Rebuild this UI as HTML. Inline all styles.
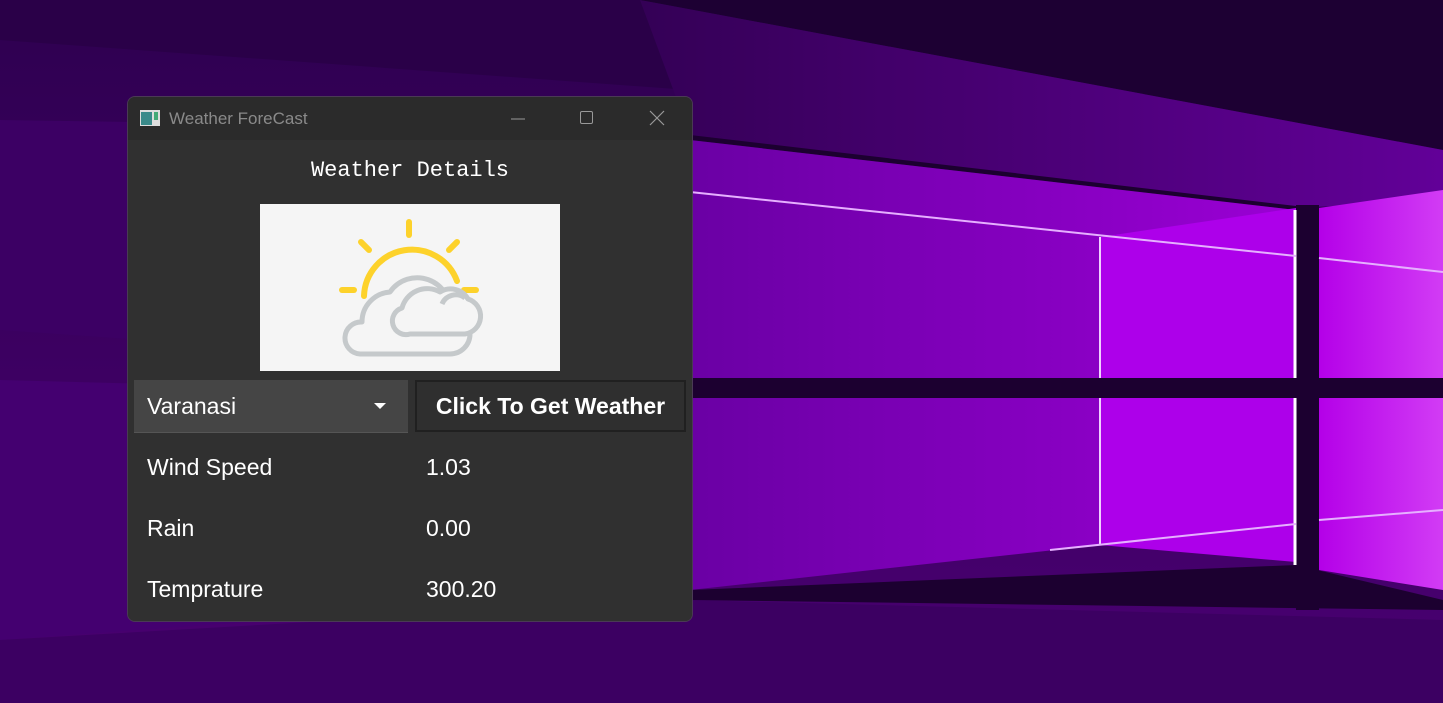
<!DOCTYPE html>
<html><head><style>
body{margin:0;width:1443px;height:703px;overflow:hidden;position:relative;font-family:"Liberation Sans",sans-serif;background:#2a0048}
svg.bg{position:absolute;left:0;top:0}
.win{position:absolute;left:127px;top:96px;width:566px;height:526px;background:#2f2f2f;border:1px solid #4a3a55;border-radius:8px;box-sizing:border-box;overflow:hidden}
.tb{height:43px;background:#2b2b2b;position:relative;color:#8a8a8a;font-size:17px}
.tb .t{position:absolute;left:41px;top:12px}
.body{position:absolute;left:0;top:43px;right:0;bottom:0;background:#303030}
.lbl{position:absolute;color:#fff;font-family:"Liberation Sans",sans-serif;font-size:23px}
</style></head><body>
<svg class="bg" width="1443" height="703" viewBox="0 0 1443 703">
<defs>
<linearGradient id="g1" x1="0" y1="0" x2="1" y2="0"><stop offset="0" stop-color="#6a00a4"/><stop offset="1" stop-color="#9a00d4"/></linearGradient>
<linearGradient id="g2" x1="0" y1="0" x2="1" y2="0"><stop offset="0" stop-color="#b400e8"/><stop offset="1" stop-color="#d23cf5"/></linearGradient>
<linearGradient id="g3" x1="0" y1="0" x2="1" y2="0"><stop offset="0" stop-color="#340056"/><stop offset="1" stop-color="#620098"/></linearGradient>
<linearGradient id="g4" x1="0" y1="0" x2="0" y2="1"><stop offset="0" stop-color="#2e0050"/><stop offset="1" stop-color="#4a0072"/></linearGradient>
</defs>
<rect width="1443" height="703" fill="url(#g4)"/>
<polygon points="0,0 650,0 690,90 0,40" fill="#2a0048"/>
<polygon points="0,120 690,130 690,378 0,330" fill="#3c0064"/>
<polygon points="0,380 690,398 690,590 0,640" fill="#440070"/>
<polygon points="0,640 690,600 1443,620 1443,703 0,703" fill="#3c0062"/>
<polygon points="640,0 1443,0 1443,150" fill="#1d0033"/>
<polygon points="640,0 1443,150 1443,200 1296,208 690,135" fill="url(#g3)"/>
<polygon points="690,135 1296,206 1296,210 690,140" fill="#1c0030"/>
<polygon points="690,140 1296,210 1100,237 1100,545 690,590" fill="url(#g1)"/>
<polygon points="1100,237 1296,208 1296,378 1100,378" fill="#ad00ea"/>
<polygon points="1100,398 1296,398 1296,562 1100,545" fill="#ad00ea"/>
<polygon points="1319,208 1443,190 1443,378 1319,378" fill="url(#g2)"/>
<polygon points="1319,398 1443,398 1443,590 1319,570" fill="url(#g2)"/>
<rect x="1296" y="205" width="23" height="405" fill="#1c0030"/>
<rect x="690" y="378" width="753" height="20" fill="#1c0030"/>
<line x1="1100" y1="237" x2="1100" y2="378" stroke="#f0d0ff" stroke-width="2"/>
<line x1="1100" y1="398" x2="1100" y2="545" stroke="#f0d0ff" stroke-width="2"/>
<line x1="1295" y1="210" x2="1295" y2="378" stroke="#fff" stroke-width="3"/>
<line x1="1295" y1="398" x2="1295" y2="565" stroke="#fff" stroke-width="3"/>
<line x1="690" y1="192" x2="1296" y2="256" stroke="#e6b0ff" stroke-width="2"/>
<line x1="1319" y1="258" x2="1443" y2="272" stroke="#e6b0ff" stroke-width="2"/>
<line x1="1050" y1="550" x2="1296" y2="524" stroke="#e6b0ff" stroke-width="2"/>
<line x1="1319" y1="520" x2="1443" y2="510" stroke="#e6b0ff" stroke-width="2"/>
<polygon points="690,590 1296,565 1443,600 1443,610 690,600" fill="#1c0030"/>
</svg>
<div class="win">
<div class="tb">
<svg style="position:absolute;left:12px;top:13px" width="20" height="16"><rect x="0" y="0" width="20" height="16" fill="#ddd"/><rect x="1" y="2" width="11" height="13" fill="#3a8a8a"/><rect x="14" y="2" width="4" height="8" fill="#4a7"/></svg>
<span class="t">Weather ForeCast</span>
<svg style="position:absolute;left:382px;top:14px" width="16" height="16"><line x1="1" y1="8" x2="15" y2="8" stroke="#999" stroke-width="1"/></svg>
<svg style="position:absolute;left:451px;top:13px" width="16" height="16"><rect x="1.5" y="1.5" width="12" height="12" rx="1.5" fill="none" stroke="#999"/></svg>
<svg style="position:absolute;left:521px;top:13px" width="16" height="16"><path d="M1 1L15 15M15 1L1 15" stroke="#999" stroke-width="1.2"/></svg>
</div>
<div class="body">
<div style="position:absolute;left:0;right:0;top:18px;text-align:center;color:#fff;font-family:'Liberation Mono',monospace;font-size:22px">Weather Details</div>
<div style="position:absolute;left:132px;top:64px;width:300px;height:167px;background:#f5f5f5">
<svg width="300" height="167" viewBox="0 0 300 167">
<g stroke="#fdd22b" stroke-width="6" stroke-linecap="round" fill="none">
<path d="M104 92 A48 48 0 0 1 197 77"/>
<line x1="149" y1="18" x2="149" y2="31"/>
<line x1="101" y1="38" x2="109" y2="46"/>
<line x1="197" y1="38" x2="189" y2="46"/>
<line x1="82" y1="86" x2="94" y2="86"/>
<line x1="204" y1="86" x2="216" y2="86"/>
</g>
<g stroke="#c5c9cb" stroke-width="5" fill="#f5f5f5" stroke-linejoin="round">
<path d="M100 150 H190 A20 20 0 0 0 190 110 A33 33 0 0 0 130 88 A30 30 0 0 0 102 118 A16 16 0 0 0 100 150 Z"/>
<path d="M150 130 H205 A18 18 0 0 0 208 95 A20 20 0 0 0 180 88 A26 26 0 0 0 142 104 A13 13 0 0 0 150 130 Z"/>
<path d="M182 100 A15 15 0 0 1 205 94"/>
</g>
</svg></div>
<div style="position:absolute;left:6px;top:240px;width:274px;height:52px;background:#454545;border-bottom:1px solid #555"></div>
<div class="lbl" style="left:19px;top:253px">Varanasi</div>
<svg style="position:absolute;left:246px;top:262px" width="12" height="8"><path d="M0 1H12L6 7Z" fill="#fff"/></svg>
<div style="position:absolute;left:287px;top:240px;width:271px;height:52px;background:#2f2f2f;border:2px solid #202020;box-sizing:border-box;color:#fff;font-weight:bold;font-size:23px;text-align:center;line-height:48px;font-family:'Liberation Sans',sans-serif">Click To Get Weather</div>
<div class="lbl" style="left:19px;top:314px">Wind Speed</div>
<div class="lbl" style="left:298px;top:314px">1.03</div>
<div class="lbl" style="left:19px;top:375px">Rain</div>
<div class="lbl" style="left:298px;top:375px">0.00</div>
<div class="lbl" style="left:19px;top:436px">Temprature</div>
<div class="lbl" style="left:298px;top:436px">300.20</div>
</div></div>
</body></html>
